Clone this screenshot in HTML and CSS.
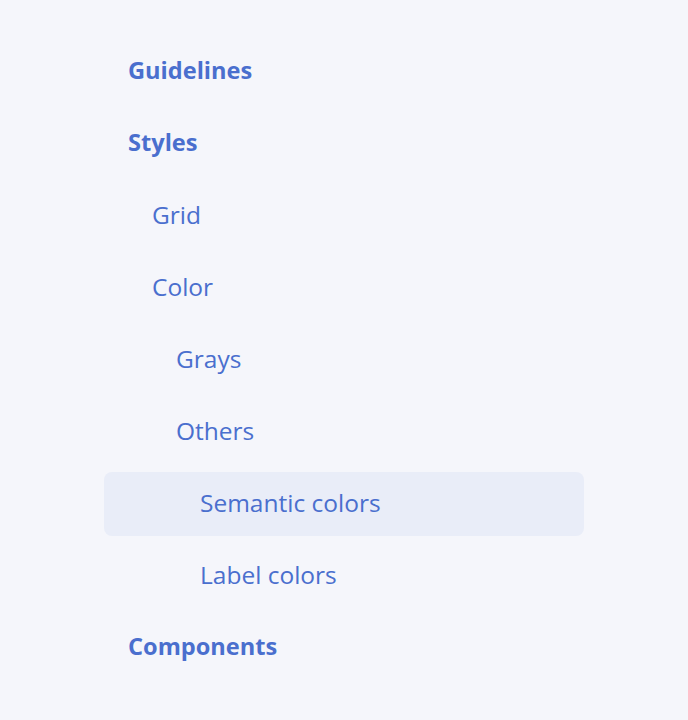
FILE: index.html
```html
<!DOCTYPE html>
<html>
<head>
<meta charset="utf-8">
<link rel="stylesheet" href="styles.css">
</head>
<body>
<nav class="sidenav">
  <ul class="list">
    <li><a class="item heading" href="#">Guidelines</a></li>
    <li><a class="item heading" href="#">Styles</a></li>
    <li><a class="item l1" href="#">Grid</a></li>
    <li><a class="item l1" href="#">Color</a></li>
    <li><a class="item l2" href="#">Grays</a></li>
    <li><a class="item l2" href="#">Others</a></li>
    <li><a class="item l3 selected" href="#">Semantic colors</a></li>
    <li><a class="item l3" href="#">Label colors</a></li>
    <li><a class="item heading" href="#">Components</a></li>
  </ul>
</nav>
</body>
</html>
```
FILE: styles.css
```css
html, body {
  margin: 0;
  padding: 0;
  background: #f5f6fb;
}
body {
  font-family: "Open Sans", "Noto Sans", sans-serif;
  color: #4a6fce;
}
.sidenav {
  padding: 40px 0 0 104px;
  width: 480px;
}
.list {
  list-style: none;
  margin: 0;
  padding: 0;
  display: flex;
  flex-direction: column;
  gap: 8px;
}
.item {
  box-sizing: border-box;
  display: flex;
  align-items: center;
  height: 64px;
  padding: 0 0 4px 24px;
  border-radius: 8px;
  color: #4a6fce;
  text-decoration: none;
  font-size: 24.5px;
  font-weight: 400;
}
.heading { font-weight: 700; font-size: 23.6px; }
.l1 { padding-left: 48px; }
.l2 { padding-left: 72px; }
.l3 { padding-left: 96px; }
.selected { background: #e9edf8; }
```
